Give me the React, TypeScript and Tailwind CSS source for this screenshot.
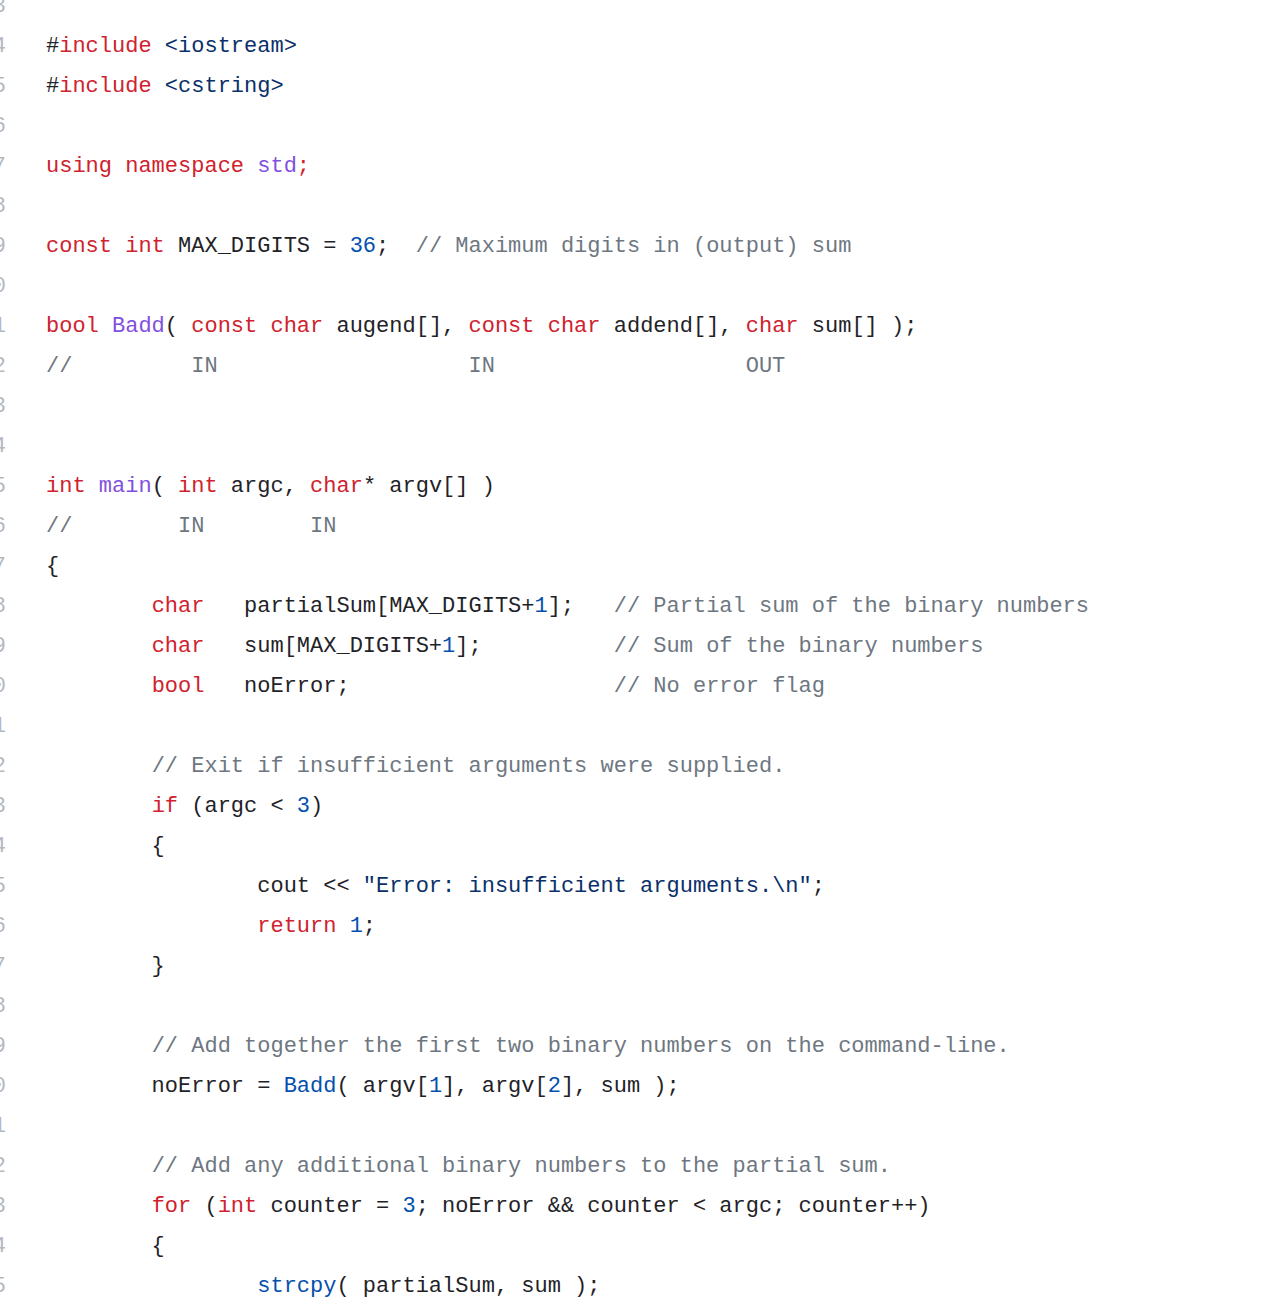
type Seg = [string, string?];

const K = "text-[#cf222e]";
const F = "text-[#8250df]";
const N = "text-[#0550ae]";
const S = "text-[#0a3069]";
const C = "text-[#6e7781]";

const pad = (n: number) => " ".repeat(n);

// one entry per source line, starting at line 3
const lines: Seg[][] = [
  [],
  [["#"], ["include", K], [" "], ["<iostream>", S]],
  [["#"], ["include", K], [" "], ["<cstring>", S]],
  [],
  [["using namespace", K], [" "], ["std", F], [";", K]],
  [],
  [["const", K], [" "], ["int", K], [" MAX_DIGITS = "], ["36", N], [";  "], ["// Maximum digits in (output) sum", C]],
  [],
  [["bool", K], [" "], ["Badd", F], ["( "], ["const", K], [" "], ["char", K], [" augend[], "], ["const", K], [" "], ["char", K], [" addend[], "], ["char", K], [" sum[] );"]],
  [["//" + pad(9) + "IN" + pad(19) + "IN" + pad(19) + "OUT", C]],
  [],
  [],
  [["int", K], [" "], ["main", F], ["( "], ["int", K], [" argc, "], ["char", K], ["* argv[] )"]],
  [["//" + pad(8) + "IN" + pad(8) + "IN", C]],
  [["{"]],
  [[pad(8)], ["char", K], [pad(3) + "partialSum[MAX_DIGITS+"], ["1", N], ["];" + pad(3)], ["// Partial sum of the binary numbers", C]],
  [[pad(8)], ["char", K], [pad(3) + "sum[MAX_DIGITS+"], ["1", N], ["];" + pad(10)], ["// Sum of the binary numbers", C]],
  [[pad(8)], ["bool", K], [pad(3) + "noError;" + pad(20)], ["// No error flag", C]],
  [],
  [[pad(8)], ["// Exit if insufficient arguments were supplied.", C]],
  [[pad(8)], ["if", K], [" (argc < "], ["3", N], [")"]],
  [[pad(8) + "{"]],
  [[pad(16) + "cout << "], ['"Error: insufficient arguments.\\n"', S], [";"]],
  [[pad(16)], ["return", K], [" "], ["1", N], [";"]],
  [[pad(8) + "}"]],
  [],
  [[pad(8)], ["// Add together the first two binary numbers on the command-line.", C]],
  [[pad(8) + "noError = "], ["Badd", N], ["( argv["], ["1", N], ["], argv["], ["2", N], ["], sum );"]],
  [],
  [[pad(8)], ["// Add any additional binary numbers to the partial sum.", C]],
  [[pad(8)], ["for", K], [" ("], ["int", K], [" counter = "], ["3", N], ["; noError && counter < argc; counter++)"]],
  [[pad(8) + "{"]],
  [[pad(16)], ["strcpy", N], ["( partialSum, sum );"]],
];

export default function App() {
  return (
    <div className="w-[1261px] h-[1308px] overflow-hidden bg-white">
      <div className="-mt-[13px] font-['Liberation_Mono',monospace] text-[22px] leading-[40px] text-[#1f2328]">
        {lines.map((segs, i) => (
          <div key={i} className="flex h-[40px]">
            <div className="w-[40px] -ml-[34px] shrink-0 text-right text-[#b4b9bf] select-none">{i + 3}</div>
            <div className="pl-[40px] whitespace-pre">
              {segs.map((s, j) => (
                <span key={j} className={s[1]}>
                  {s[0]}
                </span>
              ))}
            </div>
          </div>
        ))}
      </div>
    </div>
  );
}
